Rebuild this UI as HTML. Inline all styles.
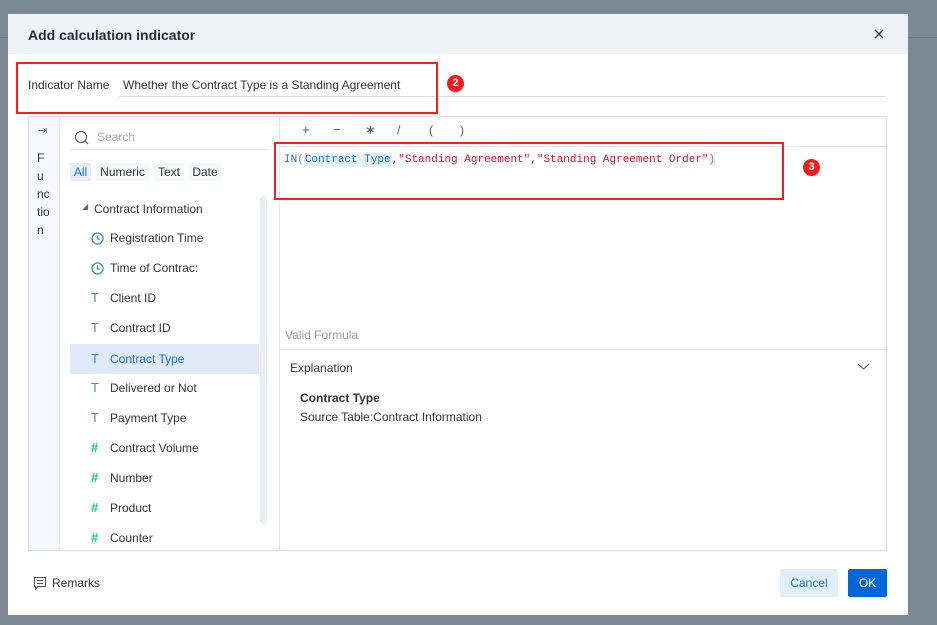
<!DOCTYPE html>
<html><head><meta charset="utf-8"><style>
*{box-sizing:border-box;margin:0;padding:0}
body{width:937px;height:625px;background:#7b8995;font-family:"Liberation Sans",sans-serif;font-size:12px;color:#333;position:relative;overflow:hidden}
.a{position:absolute}
.modal{left:8px;top:14px;width:900px;height:601px;background:#fff}
.hdr{left:0;top:0;width:900px;height:40px;background:#eff3f6}
.red{border:2px solid #ff1a1a}
.badge{width:17px;height:17px;border-radius:50%;background:#f01d1d;color:#fff;font-size:11px;text-align:center;line-height:17px;font-weight:bold}
.item{left:70px;width:189px;height:26px;line-height:26px;padding-left:40px;color:#333}
.ic{position:absolute;left:21px;top:0;font-size:13px}
.mono{font-family:"Liberation Mono",monospace;font-size:11px}
</style></head><body>
<div class="a" style="left:0;top:37px;width:937px;height:1px;background:#6d7a86"></div>
<div class="a modal">
 <div class="a hdr"><div class="a" style="left:20px;top:13px;font-size:14px;font-weight:bold;color:#1f2d3d">Add calculation indicator</div>
 <svg class="a" style="left:866px;top:15px" width="10" height="10"><path d="M1 1L9 9M9 1L1 9" stroke="#333" stroke-width="1.4"/></svg></div>
</div>
<div class="a" style="left:28px;top:78px;color:#333">Indicator Name</div>
<div class="a" style="left:123px;top:78px;font-size:12px;color:#333">Whether the Contract Type is a Standing Agreement</div>
<div class="a" style="left:119px;top:96px;width:767px;height:1px;background:#dcdfe4"></div>
<div class="a red" style="left:16px;top:62px;width:422px;height:52px"></div>
<div class="a badge" style="left:447px;top:75px">2</div>

<div class="a" style="left:28px;top:116px;width:859px;height:435px;border:1px solid #dcdfe4"></div>
<div class="a" style="left:29px;top:117px;width:31px;height:433px;background:#f5f8fc;border-right:1px solid #e3e6ea"></div>
<div class="a" style="left:38px;top:124px;font-size:11px;color:#555">⇥</div>
<div class="a" style="left:37px;top:149px;line-height:18px;color:#333;width:20px">F<br>u<br>nc<br>tio<br>n</div>
<div class="a" style="left:279px;top:117px;width:1px;height:433px;background:#e3e6ea"></div>

<svg class="a" style="left:74px;top:130px" width="16" height="16"><circle cx="7" cy="7" r="5.5" fill="none" stroke="#666" stroke-width="1.2"/><path d="M11 11L14 14" stroke="#666" stroke-width="1.3"/></svg>
<div class="a" style="left:97px;top:130px;color:#aaa">Search</div>
<div class="a" style="left:70px;top:149px;width:199px;height:1px;background:#e3e6ea"></div>
<div class="a" style="left:70px;top:163px;width:21px;height:18px;background:#e5effb;color:#1672e6;text-align:center;line-height:18px">All</div>
<div class="a" style="left:96px;top:163px;width:53px;height:18px;background:#f5f7fa;text-align:center;line-height:18px">Numeric</div>
<div class="a" style="left:154px;top:163px;width:30px;height:18px;background:#f5f7fa;text-align:center;line-height:18px">Text</div>
<div class="a" style="left:189px;top:163px;width:32px;height:18px;background:#f5f7fa;text-align:center;line-height:18px">Date</div>
<div class="a" style="left:82px;top:202px;font-size:8px;color:#666">◢</div>
<div class="a" style="left:94px;top:202px">Contract Information</div>
<div class="a" style="left:260px;top:196px;width:7px;height:328px;background:#eceef1;border-radius:4px"></div>
<div class="a" style="left:70px;top:344px;width:189px;height:30px;background:#dfe9f8"></div>

<div class="a item" style="top:225px"><svg class="ic" style="top:7px" width="13" height="13"><circle cx="6.5" cy="6.5" r="5.5" fill="none" stroke="#3d8fd8" stroke-width="1.3"/><path d="M6.5 3.5V7H9" stroke="#3d8fd8" stroke-width="1.2" fill="none"/></svg>Registration Time</div>
<div class="a item" style="top:255px"><svg class="ic" style="top:7px" width="13" height="13"><circle cx="6.5" cy="6.5" r="5.5" fill="none" stroke="#3d8fd8" stroke-width="1.3"/><path d="M6.5 3.5V7H9" stroke="#3d8fd8" stroke-width="1.2" fill="none"/></svg>Time of Contrac:</div>
<div class="a item" style="top:285px"><span class="ic" style="color:#3d8fd8">T</span>Client ID</div>
<div class="a item" style="top:315px"><span class="ic" style="color:#3d8fd8">T</span>Contract ID</div>
<div class="a item" style="top:346px;color:#1672e6"><span class="ic" style="color:#3d8fd8">T</span>Contract Type</div>
<div class="a item" style="top:375px"><span class="ic" style="color:#3d8fd8">T</span>Delivered or Not</div>
<div class="a item" style="top:405px"><span class="ic" style="color:#3d8fd8">T</span>Payment Type</div>
<div class="a item" style="top:435px"><span class="ic" style="color:#16c2a6;font-weight:bold">#</span>Contract Volume</div>
<div class="a item" style="top:465px"><span class="ic" style="color:#16c2a6;font-weight:bold">#</span>Number</div>
<div class="a item" style="top:495px"><span class="ic" style="color:#16c2a6;font-weight:bold">#</span>Product</div>
<div class="a" style="left:70px;top:529px;width:189px;height:14px;overflow:hidden"><div style="position:relative;top:1px;padding-left:40px;line-height:16px"><span class="ic" style="color:#16c2a6;font-weight:bold">#</span>Counter</div></div>

<div class="a" style="left:302px;top:122px;color:#555;font-size:13px">+</div>
<div class="a" style="left:333px;top:122px;color:#555;font-size:13px">−</div>
<div class="a" style="left:365px;top:122px;color:#555;font-size:13px">∗</div>
<div class="a" style="left:397px;top:123px;color:#555">/</div>
<div class="a" style="left:429px;top:123px;color:#555">(</div>
<div class="a" style="left:460px;top:123px;color:#555">)</div>
<div class="a" style="left:280px;top:146px;width:606px;height:1px;background:#e8eaed"></div>
<div class="a mono" style="left:284px;top:154px;white-space:pre;color:#d12"><span style="color:#1672e6">IN</span><span style="color:#888">(</span><span style="color:#1672e6;background:#e5f1fc;padding:1px 1px">Contract Type</span><span style="color:#333">,</span>"Standing Agreement"<span style="color:#333">,</span>"Standing Agreement Order"<span style="color:#888;background:#e5f1fc">)</span></div>
<div class="a red" style="left:274px;top:142px;width:510px;height:58px"></div>
<div class="a badge" style="left:803px;top:159px">3</div>
<div class="a" style="left:285px;top:328px;color:#999">Valid Formula</div>
<div class="a" style="left:280px;top:349px;width:606px;height:1px;background:#e3e6ea"></div>
<div class="a" style="left:290px;top:361px">Explanation</div>
<svg class="a" style="left:857px;top:363px" width="13" height="8"><path d="M1 1L6.5 6L12 1" stroke="#666" fill="none" stroke-width="1.1"/></svg>
<div class="a" style="left:300px;top:391px;font-weight:bold;color:#333">Contract Type</div>
<div class="a" style="left:300px;top:410px">Source Table:Contract Information</div>

<svg class="a" style="left:33px;top:576px" width="14" height="14"><path d="M1.5 1.5H12.5V10.5H5L2.5 13V10.5H1.5Z" fill="none" stroke="#555" stroke-width="1.1"/><path d="M4 4.5H10M4 7.5H10" stroke="#555"/></svg>
<div class="a" style="left:52px;top:576px">Remarks</div>
<div class="a" style="left:780px;top:569px;width:58px;height:28px;background:#e3eefb;color:#1672e6;text-align:center;line-height:28px;border-radius:2px">Cancel</div>
<div class="a" style="left:848px;top:569px;width:39px;height:28px;background:#0065d9;color:#fff;text-align:center;line-height:28px;border-radius:2px">OK</div>
</body></html>
